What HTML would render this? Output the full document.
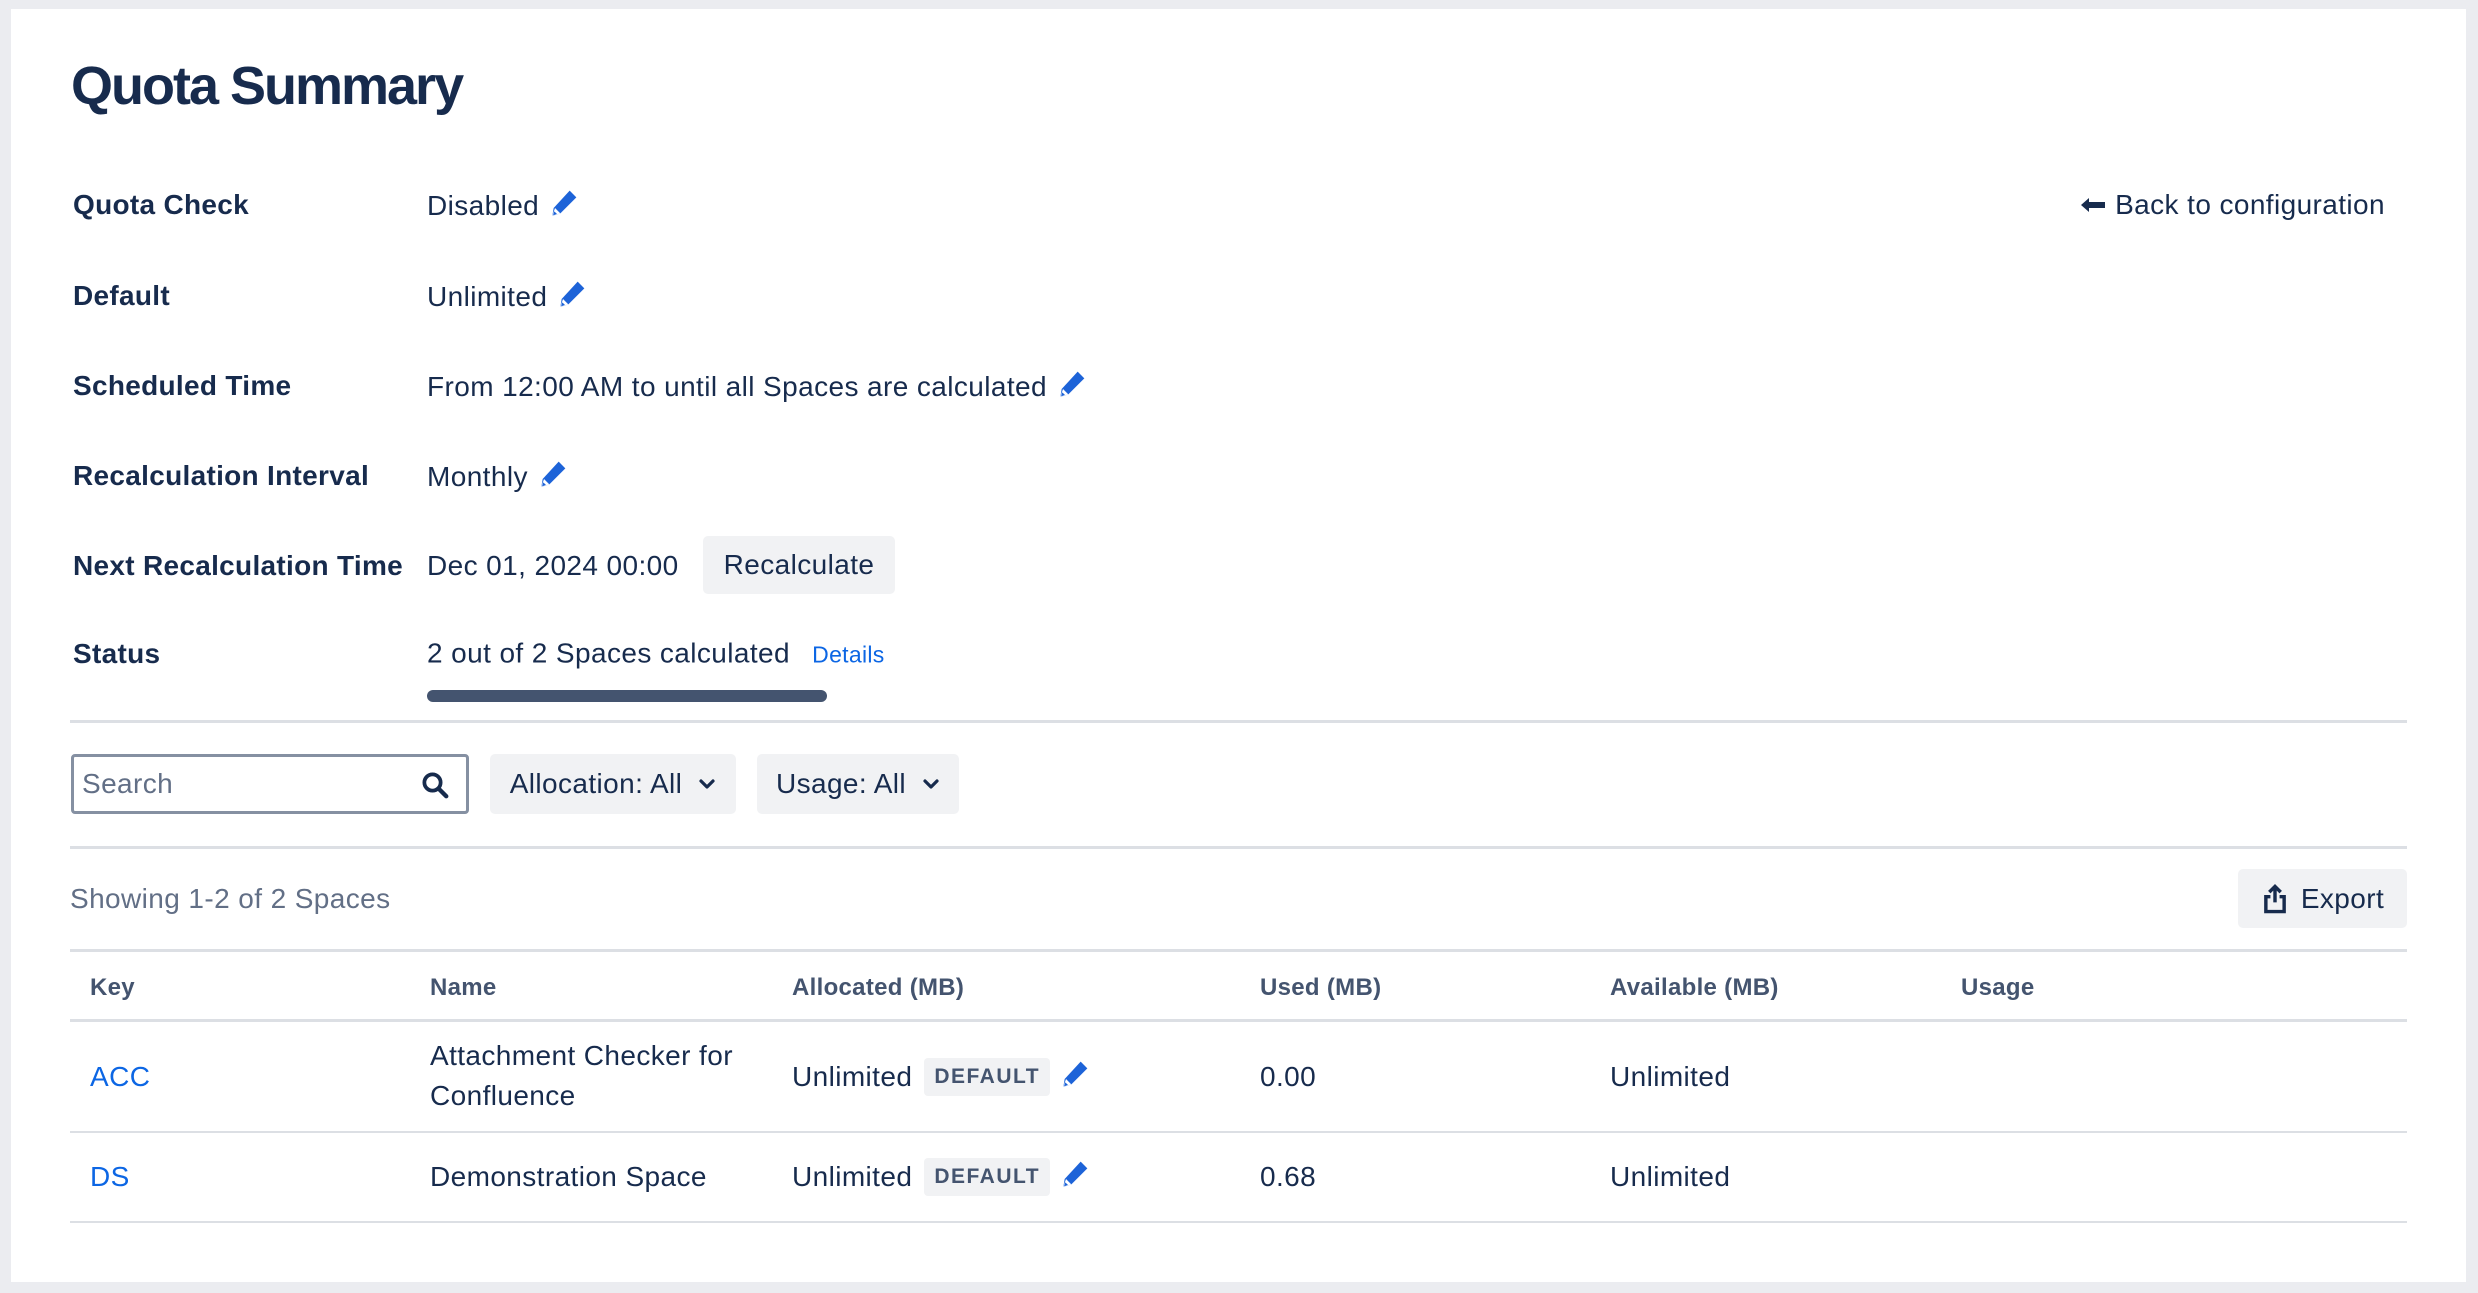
<!DOCTYPE html>
<html><head><meta charset="utf-8"><style>
*{margin:0;padding:0;box-sizing:border-box}
body{width:2478px;height:1293px;background:#ebecf0;font-family:"Liberation Sans",sans-serif;color:#172b4d;position:relative;overflow:hidden}
.panel{position:absolute;left:11px;top:9px;width:2455px;height:1273px;background:#fff}
.a{position:absolute;white-space:nowrap}
.t{font-size:28px;line-height:32px;transform:translateY(-50%);letter-spacing:0.4px}
.lab{font-weight:bold;letter-spacing:0.3px}
.pen{display:inline-block;width:32px;height:32px;vertical-align:-5px;margin-left:8px}
.hr{position:absolute;left:70px;width:2337px;height:3px;background:#dcdfe4}
.btn{position:absolute;background:#f1f2f4;border-radius:5px;font-size:28px;letter-spacing:0.4px;display:flex;align-items:center;justify-content:center;color:#172b4d}
.th{font-size:24px;font-weight:bold;color:#44546f;letter-spacing:0.3px}
.badge{display:inline-block;background:#f1f2f4;color:#44546f;font-weight:bold;font-size:21px;letter-spacing:1.5px;padding:3px 10px;border-radius:4px;vertical-align:3px;margin-left:12px}
.lnk{color:#0c66e4}
.chev{width:18px;height:12px;margin-left:16px}
</style></head><body>
<svg width="0" height="0" style="position:absolute"><defs><symbol id="p" viewBox="0 0 24 24"><path d="M17 2l5 5-12 12-6 2 1-6z" fill="#1d63d8"/><path d="M4 21l6-2-4-4z" fill="#fff"/><path d="M4.5 20.5l3-1-2-2z" fill="#1d63d8"/></symbol><symbol id="c" viewBox="0 0 18 12"><path d="M3 3l6 6 6-6" fill="none" stroke="#172b4d" stroke-width="3.2" stroke-linecap="round" stroke-linejoin="round"/></symbol></defs></svg>
<div class="panel"></div>
<div class="a" style="left:71px;top:54px;font-size:54px;line-height:64px;font-weight:bold;color:#172b4d;letter-spacing:-2px">Quota Summary</div>

<div class="a t lab" style="left:73px;top:205px">Quota Check</div>
<div class="a t" style="left:427px;top:205px">Disabled<svg class="pen"><use href="#p"/></svg></div>
<div class="a t" style="right:93px;top:205px"><svg width="28" height="20" viewBox="0 0 28 20" style="vertical-align:-1px;margin-right:8px"><path d="M2 10l8-7v4h16v6H10v4z" fill="#172b4d"/></svg>Back to configuration</div>

<div class="a t lab" style="left:73px;top:296px">Default</div>
<div class="a t" style="left:427px;top:296px">Unlimited<svg class="pen"><use href="#p"/></svg></div>

<div class="a t lab" style="left:73px;top:386px">Scheduled Time</div>
<div class="a t" style="left:427px;top:386px">From 12:00 AM to until all Spaces are calculated<svg class="pen"><use href="#p"/></svg></div>

<div class="a t lab" style="left:73px;top:476px">Recalculation Interval</div>
<div class="a t" style="left:427px;top:476px">Monthly<svg class="pen"><use href="#p"/></svg></div>

<div class="a t lab" style="left:73px;top:566px">Next Recalculation Time</div>
<div class="a t" style="left:427px;top:566px">Dec 01, 2024 00:00</div>
<div class="btn" style="left:703px;top:536px;width:192px;height:58px">Recalculate</div>

<div class="a t lab" style="left:73px;top:654px">Status</div>
<div class="a t" style="left:427px;top:654px">2 out of 2 Spaces calculated <span class="lnk" style="font-size:23px;margin-left:14px;letter-spacing:0.3px">Details</span></div>
<div class="a" style="left:427px;top:690px;width:400px;height:12px;background:#44546f;border-radius:6px"></div>

<div class="hr" style="top:720px"></div>
<div class="a" style="left:71px;top:754px;width:398px;height:60px;border:3px solid #8590a2;border-radius:4px"></div>
<div class="a t" style="left:82px;top:784px;color:#626f86">Search</div>
<svg class="a" style="left:420px;top:770px" width="30" height="30" viewBox="0 0 24 24"><circle cx="10" cy="10" r="6.5" fill="none" stroke="#172b4d" stroke-width="3"/><path d="M15 15l6 6" stroke="#172b4d" stroke-width="3.5" stroke-linecap="round"/></svg>
<div class="btn" style="left:490px;top:754px;width:246px;height:60px">Allocation: All<svg class="chev"><use href="#c"/></svg></div>
<div class="btn" style="left:757px;top:754px;width:202px;height:60px">Usage: All<svg class="chev"><use href="#c"/></svg></div>

<div class="hr" style="top:846px"></div>
<div class="a t" style="left:70px;top:899px;color:#626f86">Showing 1-2 of 2 Spaces</div>
<div class="btn" style="left:2238px;top:869px;width:169px;height:59px"><svg width="28" height="32" viewBox="0 0 24 28" style="margin-right:12px"><path d="M12 3v14M7 8l5-5 5 5" fill="none" stroke="#172b4d" stroke-width="3"/><path d="M8 12H4v13h16V12h-4" fill="none" stroke="#172b4d" stroke-width="3"/></svg>Export</div>

<div class="hr" style="top:949px"></div>
<div class="a t th" style="left:90px;top:988px">Key</div>
<div class="a t th" style="left:430px;top:988px">Name</div>
<div class="a t th" style="left:792px;top:988px">Allocated (MB)</div>
<div class="a t th" style="left:1260px;top:988px">Used (MB)</div>
<div class="a t th" style="left:1610px;top:988px">Available (MB)</div>
<div class="a t th" style="left:1961px;top:988px">Usage</div>
<div class="hr" style="top:1019px"></div>

<div class="a t lnk" style="left:90px;top:1077px">ACC</div>
<div class="a" style="left:430px;top:1036px;font-size:28px;line-height:40px;letter-spacing:0.4px">Attachment Checker for<br>Confluence</div>
<div class="a t" style="left:792px;top:1077px">Unlimited<span class="badge">DEFAULT</span><svg class="pen"><use href="#p"/></svg></div>
<div class="a t" style="left:1260px;top:1077px">0.00</div>
<div class="a t" style="left:1610px;top:1077px">Unlimited</div>
<div class="hr" style="top:1131px;height:2px"></div>

<div class="a t lnk" style="left:90px;top:1177px">DS</div>
<div class="a t" style="left:430px;top:1177px">Demonstration Space</div>
<div class="a t" style="left:792px;top:1177px">Unlimited<span class="badge">DEFAULT</span><svg class="pen"><use href="#p"/></svg></div>
<div class="a t" style="left:1260px;top:1177px">0.68</div>
<div class="a t" style="left:1610px;top:1177px">Unlimited</div>
<div class="hr" style="top:1221px;height:2px"></div>
</body></html>
